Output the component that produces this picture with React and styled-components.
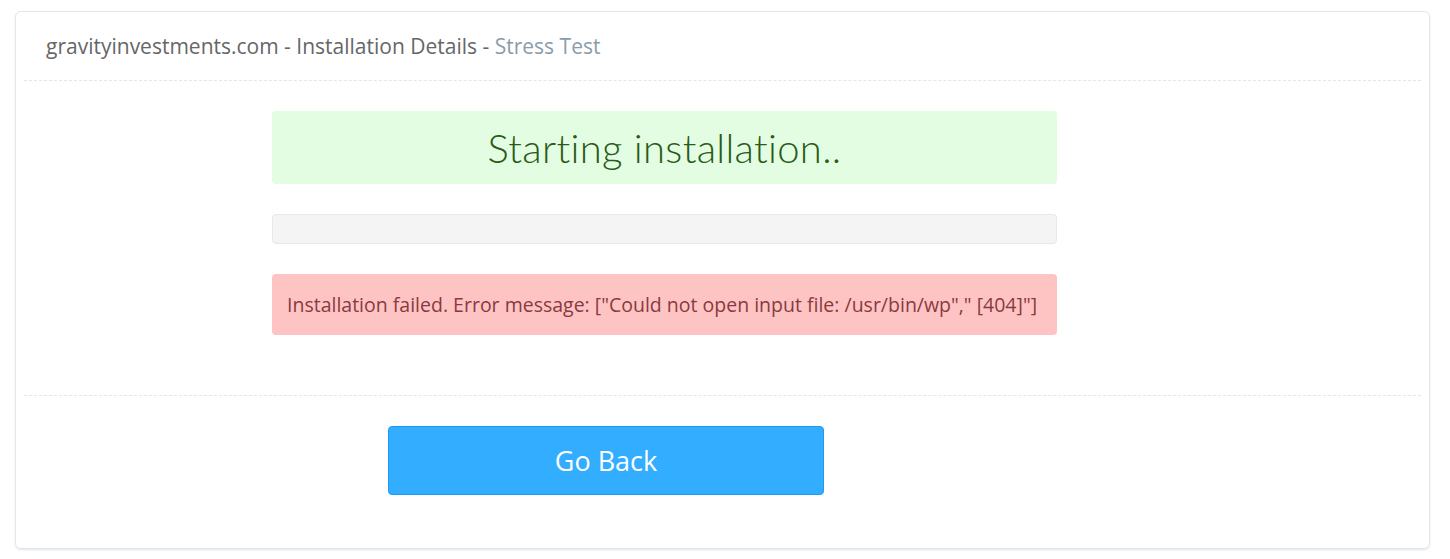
import React from 'react';
import styled, { createGlobalStyle } from 'styled-components';

const GlobalStyle = createGlobalStyle`
  html, body {
    margin: 0;
    padding: 0;
    background: #fff;
    font-family: "Open Sans", "Liberation Sans", sans-serif;
  }
`;

const Page = styled.div`
  padding: 11px 20px 10px 15px;
`;

const Card = styled.div`
  box-sizing: border-box;
  height: 538px;
  border: 1px solid #e0e6ed;
  border-radius: 6px;
  box-shadow: 0 1px 2px rgba(200, 210, 225, 0.6);
  padding: 0 8px;
`;

const Header = styled.div`
  height: 68px;
  padding-left: 22px;
  display: flex;
  align-items: center;
  border-bottom: 1px dashed #e0e6ed;
  font-size: 21px;
  color: #666;
`;

const Muted = styled.span`
  color: #8a9ca9;
`;

const Body = styled.div`
  padding: 30px 0 60px 248px;
  border-bottom: 1px dashed #e0e6ed;
  display: flex;
  flex-direction: column;
  gap: 30px;
`;

const Notice = styled.div`
  box-sizing: border-box;
  width: 785px;
  height: ${(p) => p.h}px;
  border-radius: 4px;
  display: flex;
  align-items: center;
  background: ${(p) => (p.kind === 'success' ? '#e2fde2' : '#fec4c4')};
  color: ${(p) => (p.kind === 'success' ? '#2a5a18' : '#8a3a3e')};
  justify-content: ${(p) => (p.kind === 'success' ? 'center' : 'flex-start')};
  padding: ${(p) => (p.kind === 'success' ? '0' : '0 15px')};
`;

const Title = styled.span`
  font-family: "Lato", "Open Sans", sans-serif;
  font-weight: 300;
  font-size: 40px;
  letter-spacing: 0.3px;
`;

const Message = styled.span`
  font-size: 19.5px;
`;

const Progress = styled.div`
  box-sizing: border-box;
  width: 785px;
  height: 30px;
  background: #f4f4f4;
  border: 1px solid #e8e8e8;
  border-radius: 4px;
`;

const Footer = styled.div`
  padding: 30px 0 0 364px;
`;

const Button = styled.button`
  box-sizing: border-box;
  width: 436px;
  height: 69px;
  background: #33adff;
  border: 1px solid #1a9cf5;
  border-radius: 4px;
  color: #fff;
  font-family: "Open Sans", "Liberation Sans", sans-serif;
  font-size: 27px;
  cursor: pointer;
`;

export default function App() {
  return (
    <Page>
      <GlobalStyle />
      <Card>
        <Header>
          gravityinvestments.com - Installation Details -&nbsp;<Muted>Stress Test</Muted>
        </Header>
        <Body>
          <Notice kind="success" h={73}>
            <Title>Starting installation..</Title>
          </Notice>
          <Progress />
          <Notice kind="error" h={61}>
            <Message>
              Installation failed. Error message: ["Could not open input file: /usr/bin/wp"," [404]"]
            </Message>
          </Notice>
        </Body>
        <Footer>
          <Button>Go Back</Button>
        </Footer>
      </Card>
    </Page>
  );
}
